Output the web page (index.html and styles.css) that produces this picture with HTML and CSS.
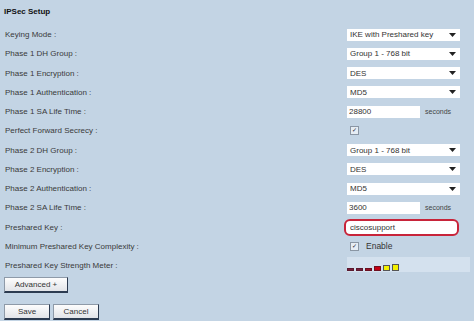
FILE: index.html
```html
<!DOCTYPE html>
<html lang="en">
<head>
    <meta charset="UTF-8">
    <title>IPSec Setup</title>
    <link rel="stylesheet" href="styles.css">
</head>
<body>
    <div id="page">
        <h1 class="title">IPSec Setup</h1>

        <div class="form">
            <div class="label">Keying Mode :</div>
            <div class="field"><div class="select">IKE with Preshared key<svg class="arrow" width="7" height="4" viewBox="0 0 7 4"><path d="M0 0h7L3.5 4z" fill="#222"/></svg></div></div>

            <div class="label">Phase 1 DH Group :</div>
            <div class="field"><div class="select">Group 1 - 768 bit<svg class="arrow" width="7" height="4" viewBox="0 0 7 4"><path d="M0 0h7L3.5 4z" fill="#222"/></svg></div></div>

            <div class="label">Phase 1 Encryption :</div>
            <div class="field"><div class="select">DES<svg class="arrow" width="7" height="4" viewBox="0 0 7 4"><path d="M0 0h7L3.5 4z" fill="#222"/></svg></div></div>

            <div class="label">Phase 1 Authentication :</div>
            <div class="field"><div class="select">MD5<svg class="arrow" width="7" height="4" viewBox="0 0 7 4"><path d="M0 0h7L3.5 4z" fill="#222"/></svg></div></div>

            <div class="label">Phase 1 SA Life Time :</div>
            <div class="field"><input class="text" type="text" value="28800"><span class="unit">seconds</span></div>

            <div class="label">Perfect Forward Secrecy :</div>
            <div class="field"><span class="check">&#10003;</span></div>

            <div class="label">Phase 2 DH Group :</div>
            <div class="field"><div class="select">Group 1 - 768 bit<svg class="arrow" width="7" height="4" viewBox="0 0 7 4"><path d="M0 0h7L3.5 4z" fill="#222"/></svg></div></div>

            <div class="label">Phase 2 Encryption :</div>
            <div class="field"><div class="select">DES<svg class="arrow" width="7" height="4" viewBox="0 0 7 4"><path d="M0 0h7L3.5 4z" fill="#222"/></svg></div></div>

            <div class="label">Phase 2 Authentication :</div>
            <div class="field"><div class="select">MD5<svg class="arrow" width="7" height="4" viewBox="0 0 7 4"><path d="M0 0h7L3.5 4z" fill="#222"/></svg></div></div>

            <div class="label">Phase 2 SA Life Time :</div>
            <div class="field"><input class="text" type="text" value="3600"><span class="unit">seconds</span></div>

            <div class="label">Preshared Key :</div>
            <div class="field"><input class="text key" type="text" value="ciscosupport"></div>

            <div class="label">Minimum Preshared Key Complexity :</div>
            <div class="field"><span class="check">&#10003;</span><span class="enable">Enable</span></div>

            <div class="label">Preshared Key Strength Meter :</div>
            <div class="field">
                <div class="meter">
                    <span class="bar b1"></span>
                    <span class="bar b2"></span>
                    <span class="bar b3"></span>
                    <span class="bar b4"></span>
                    <span class="bar b5"></span>
                    <span class="bar b6"></span>
                </div>
            </div>
        </div>

        <div class="actions">
            <button class="btn advanced">Advanced +</button>
        </div>
        <div class="actions">
            <button class="btn save">Save</button>
            <button class="btn cancel">Cancel</button>
        </div>
    </div>
</body>
</html>
```

FILE: styles.css
```css
body {
    margin: 0;
    padding: 0;
    background-color: #c3d4e4;
    font-family: "Liberation Sans", Arial, sans-serif;
    font-size: 8px;
    color: #3a3a3a;
    height: 321px;
    overflow: hidden;
}

#page {
    padding: 6px 0 0 4px;
}

.title {
    margin: 0;
    font-size: 8px;
    font-weight: bold;
    color: #111;
    line-height: 12px;
}

/* label / control grid */
.form {
    display: grid;
    grid-template-columns: 343px 1fr;
    grid-auto-rows: 19.25px;
    margin-top: 7px;
}

.label {
    display: flex;
    align-items: center;
    padding-left: 1px;
}

.field {
    display: flex;
    align-items: center;
}

.select {
    width: 113px;
    height: 12px;
    background-color: #fff;
    display: flex;
    align-items: center;
    justify-content: space-between;
    padding: 0 4px 0 3px;
    box-sizing: border-box;
    color: #333;
}

.text {
    width: 73px;
    height: 12px;
    border: none;
    background-color: #fff;
    padding: 0 2px;
    box-sizing: border-box;
    font-family: inherit;
    font-size: 8px;
    color: #333;
    outline: none;
}

.unit {
    margin-left: 5px;
    font-size: 7px;
    color: #444;
}

.text.key {
    width: 115px;
    height: 17px;
    margin-left: -3px;
    border: 2px solid #c8243a;
    border-radius: 6px;
    padding-left: 4px;
}

.check {
    width: 7px;
    height: 7px;
    margin-left: 3px;
    border: 1px solid #8a96a4;
    background-color: #e6edf4;
    font-size: 6px;
    line-height: 7px;
    text-align: center;
    color: #223;
}

.enable {
    margin-left: 7px;
    font-size: 8.5px;
    color: #333;
}

/* strength meter */
.meter {
    width: 123px;
    height: 15px;
    margin-top: -2px;
    background-color: #d4e1ee;
    display: flex;
    align-items: flex-end;
    gap: 2px;
    padding-bottom: 1px;
    box-sizing: border-box;
}

.bar {
    width: 7px;
    box-sizing: border-box;
    border: 1px solid #333;
}

.b1, .b2 { height: 3px; background-color: #7d1c3c; border-color: #5a1a2e; }
.b3 { height: 3px; background-color: #9b1026; border-color: #6a1020; }
.b4 { height: 5px; background-color: #c40014; border-color: #6e1020; }
.b5 { height: 6px; background-color: #f3f000; border-color: #555; }
.b6 { height: 7px; background-color: #f3f000; border-color: #555; }

/* buttons */
.actions {
    display: flex;
    gap: 3px;
}

.btn {
    height: 16px;
    padding: 0;
    font-family: inherit;
    font-size: 8px;
    color: #333;
    background: linear-gradient(#fdfdfd, #e2e4e8);
    border: 1px solid #8e9aa8;
    border-right-color: #2c3b50;
    border-bottom-color: #2c3b50;
    border-bottom-width: 2px;
}

.advanced {
    width: 64px;
    margin-top: 2px;
}

.save {
    width: 46px;
    margin-top: 11px;
}

.cancel {
    width: 46px;
    margin-top: 11px;
}
```
